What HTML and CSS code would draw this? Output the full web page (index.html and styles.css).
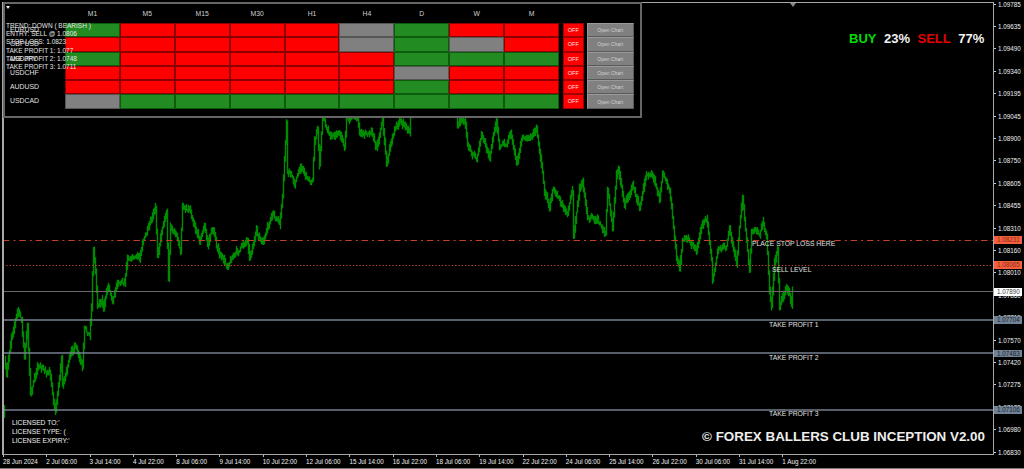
FILE: index.html
```html
<!DOCTYPE html>
<html lang="en">
<head>
    <meta charset="UTF-8">
    <title>Forex Ballers Club Inception</title>
    <link rel="stylesheet" href="styles.css">
</head>
<body>
    <div class="terminal">
        <div class="chart">
            <svg class="plot" width="994" height="454" viewBox="0 0 994 454">
                <path id="candles" class="candles" d=""></path>
                <line class="level stop" x1="3" y1="240.5" x2="993" y2="240.5"></line>
                <line class="level sell" x1="3" y1="265.5" x2="993" y2="265.5"></line>
                <line class="level now" x1="3" y1="291.5" x2="993" y2="291.5"></line>
                <line class="level tp" x1="3" y1="320" x2="993" y2="320"></line>
                <line class="level tp" x1="3" y1="353" x2="993" y2="353"></line>
                <line class="level tp" x1="3" y1="410" x2="993" y2="410"></line>
            </svg>
            <div class="frame"></div>
            <div class="shift-mark"></div>

            <span class="level-label label-stop">PLACE STOP LOSS HERE</span>
            <span class="level-label label-sell">SELL LEVEL</span>
            <span class="level-label label-tp1">TAKE PROFIT 1</span>
            <span class="level-label label-tp2">TAKE PROFIT 2</span>
            <span class="level-label label-tp3">TAKE PROFIT 3</span>

            <div class="panel">
                <div class="panel__mark"></div>
                <div class="matrix">
                    <div></div>
                    <div class="head">M1</div><div class="head">M5</div><div class="head">M15</div>
                    <div class="head">M30</div><div class="head">H1</div><div class="head">H4</div>
                    <div class="head">D</div><div class="head">W</div><div class="head">M</div>
                    <div></div><div></div>

                    <div class="symbol">EURUSD</div>
                    <div class="cell green"></div><div class="cell red"></div><div class="cell red"></div>
                    <div class="cell red"></div><div class="cell red"></div><div class="cell gray"></div>
                    <div class="cell green"></div><div class="cell red"></div><div class="cell red"></div>
                    <div class="off">OFF</div><button class="open">Open Chart</button>

                    <div class="symbol">GBPUSD</div>
                    <div class="cell red"></div><div class="cell red"></div><div class="cell red"></div>
                    <div class="cell red"></div><div class="cell red"></div><div class="cell gray"></div>
                    <div class="cell green"></div><div class="cell gray"></div><div class="cell red"></div>
                    <div class="off">OFF</div><button class="open">Open Chart</button>

                    <div class="symbol">USDJPY</div>
                    <div class="cell green"></div><div class="cell red"></div><div class="cell red"></div>
                    <div class="cell red"></div><div class="cell red"></div><div class="cell red"></div>
                    <div class="cell green"></div><div class="cell green"></div><div class="cell green"></div>
                    <div class="off">OFF</div><button class="open">Open Chart</button>

                    <div class="symbol">USDCHF</div>
                    <div class="cell red"></div><div class="cell red"></div><div class="cell red"></div>
                    <div class="cell red"></div><div class="cell red"></div><div class="cell red"></div>
                    <div class="cell gray"></div><div class="cell red"></div><div class="cell red"></div>
                    <div class="off">OFF</div><button class="open">Open Chart</button>

                    <div class="symbol">AUDUSD</div>
                    <div class="cell red"></div><div class="cell red"></div><div class="cell red"></div>
                    <div class="cell red"></div><div class="cell red"></div><div class="cell red"></div>
                    <div class="cell green"></div><div class="cell red"></div><div class="cell red"></div>
                    <div class="off">OFF</div><button class="open">Open Chart</button>

                    <div class="symbol">USDCAD</div>
                    <div class="cell gray"></div><div class="cell green"></div><div class="cell green"></div>
                    <div class="cell green"></div><div class="cell green"></div><div class="cell green"></div>
                    <div class="cell green"></div><div class="cell green"></div><div class="cell green"></div>
                    <div class="off">OFF</div><button class="open">Open Chart</button>
                </div>
                <div class="trade">
                    <div>TREND: DOWN ( BEARISH )</div>
                    <div>ENTRY: SELL @ 1.0806</div>
                    <div>STOP LOSS: 1.0823</div>
                    <div>TAKE PROFIT 1: 1.077</div>
                    <div>TAKE PROFIT 2: 1.0748</div>
                    <div>TAKE PROFIT 3: 1.0711</div>
                </div>
            </div>

            <div class="strength">
                <span class="buy">BUY</span><span>23%</span>
                <span class="sell">SELL</span><span>77%</span>
            </div>

            <div class="license">
                <div>LICENSED TO:'</div>
                <div>LICENSE TYPE: (</div>
                <div>LICENSE EXPIRY:'</div>
            </div>

            <div class="brand">© FOREX BALLERS CLUB INCEPTION V2.00</div>
        </div>

        <div class="prices">
            <div class="prices__list">
                <div class="price">1.09785</div><div class="price">1.09635</div><div class="price">1.09490</div>
                <div class="price">1.09340</div><div class="price">1.09195</div><div class="price">1.09045</div>
                <div class="price">1.08900</div><div class="price">1.08750</div><div class="price">1.08605</div>
                <div class="price">1.08455</div><div class="price">1.08310</div><div class="price">1.08160</div>
                <div class="price">1.08010</div><div class="price">1.07860</div><div class="price">1.07715</div>
                <div class="price">1.07570</div><div class="price">1.07420</div><div class="price">1.07275</div>
                <div class="price">1.07125</div><div class="price">1.06980</div><div class="price">1.06830</div>
            </div>
            <div class="tag tag-red tag-stop">1.08231</div>
            <div class="tag tag-red tag-sell">1.08065</div>
            <div class="tag tag-white tag-now">1.07890</div>
            <div class="tag tag-slate tag-tp1">1.07704</div>
            <div class="tag tag-slate tag-tp2">1.07483</div>
            <div class="tag tag-slate tag-tp3">1.07106</div>
        </div>

        <div class="times">
            <div class="time">28 Jun 2024</div><div class="time">2 Jul 06:00</div><div class="time">3 Jul 14:00</div>
            <div class="time">4 Jul 22:00</div><div class="time">8 Jul 06:00</div><div class="time">9 Jul 14:00</div>
            <div class="time">10 Jul 22:00</div><div class="time">12 Jul 06:00</div><div class="time">15 Jul 14:00</div>
            <div class="time">16 Jul 22:00</div><div class="time">18 Jul 06:00</div><div class="time">19 Jul 14:00</div>
            <div class="time">22 Jul 22:00</div><div class="time">24 Jul 06:00</div><div class="time">25 Jul 14:00</div>
            <div class="time">26 Jul 22:00</div><div class="time">30 Jul 06:00</div><div class="time">31 Jul 14:00</div>
            <div class="time">1 Aug 22:00</div>
        </div>
    </div>
    <script src="chart.js"></script>
</body>
</html>
```

FILE: styles.css
```css
* {
    box-sizing: border-box;
    margin: 0;
    padding: 0;
}
html, body {
    height: 100%;
    overflow: hidden;
    background-color: #000;
}
body {
    font-family: "Liberation Sans", Arial, sans-serif;
    color: #ccc;
}
.terminal {
    display: grid;
    grid-template-columns: 994px 30px;
    grid-template-rows: 455px 13px;
    width: 1024px;
    height: 469px;
    border-bottom: 1px solid #777;
}

/* chart canvas */
.chart {
    position: relative;
    overflow: hidden;
}
.plot {
    display: block;
}
.candles {
    fill: none;
    stroke: #008c00;
    stroke-width: 1.4;
}
.level {
    fill: none;
}
.stop {
    stroke: #c04224;
    stroke-dasharray: 6.5 4 2 3.8;
}
.sell {
    stroke: #c04a34;
    stroke-dasharray: 1.3 2;
}
.now {
    stroke: #6a6a6a;
}
.tp {
    stroke: #75808e;
    stroke-width: 1.5;
}
.frame {
    position: absolute;
    left: 2px;
    top: 2px;
    width: 992px;
    height: 453px;
    border: 1px solid #a8a8a8;
    border-left-width: 2px;
}
.shift-mark {
    position: absolute;
    left: 790px;
    top: 3px;
    border: 3px solid transparent;
    border-top: 4px solid #888;
}
.level-label {
    position: absolute;
    font-size: 6.8px;
    color: #e0e0e0;
    white-space: nowrap;
}
.label-stop { left: 752px; top: 240px; }
.label-sell { left: 772px; top: 266px; }
.label-tp1 { left: 769px; top: 321px; }
.label-tp2 { left: 769px; top: 354px; }
.label-tp3 { left: 769px; top: 410px; }

/* signal panel */
.panel {
    position: absolute;
    left: 3px;
    top: 2px;
    width: 639px;
    height: 116px;
    background-color: #000;
    border: 2px solid #666;
}
.panel__mark {
    position: absolute;
    left: 1px;
    top: 2px;
    border: 2.5px solid transparent;
    border-top: 3px solid #eee;
}
.matrix {
    display: grid;
    grid-template-columns: 60px repeat(9, 54.9px) 20.5px 47.5px;
    grid-template-rows: 19px repeat(6, 14.3px);
}
.head {
    font-size: 6.8px;
    color: #d0d0d0;
    text-align: center;
    line-height: 19px;
}
.symbol {
    font-size: 6.9px;
    line-height: 14.3px;
    padding-left: 5px;
    color: #e0e0e0;
}
.cell {
    border: 1px solid #000;
}
.red {
    background-color: #f00;
    border-color: #8c0000;
}
.green {
    background-color: #228b22;
    border-color: #0c5c0c;
}
.gray {
    background-color: #808080;
    border-color: #555;
}
.off {
    margin-left: 4px;
    width: 20.5px;
    background-color: #f00;
    border: 1px solid #a00000;
    color: #ffe0e0;
    font-size: 5.5px;
    line-height: 12.3px;
    text-align: center;
}
.open {
    margin-left: 7px;
    width: 47.5px;
    background-color: #808080;
    border: 1px solid #5a5a5a;
    border-top-color: #999;
    border-left-color: #999;
    color: #d0d0d0;
    font-family: inherit;
    font-size: 5px;
}
.trade {
    position: absolute;
    left: 1px;
    top: 18px;
    font-size: 6.5px;
    line-height: 8.2px;
    color: #e4e4e4;
    white-space: nowrap;
}

/* top right buy / sell share */
.strength {
    position: absolute;
    left: 849px;
    top: 31px;
    display: flex;
    gap: 7.5px;
    font-size: 13px;
    font-weight: bold;
    color: #f2f2f2;
}
.strength .sell {
    color: #e60000;
    stroke: none;
}
.buy {
    color: #00dc00;
}

.license {
    position: absolute;
    left: 12px;
    top: 419px;
    font-size: 6.7px;
    line-height: 8.9px;
    color: #f0f0f0;
}
.brand {
    position: absolute;
    right: 9px;
    top: 429px;
    font-size: 13.4px;
    font-weight: bold;
    color: #eee;
    white-space: nowrap;
}

/* price axis */
.prices {
    position: relative;
    overflow: hidden;
}
.prices__list {
    margin-top: -7px;
}
.price {
    display: flex;
    align-items: center;
    gap: 2px;
    height: 22.4px;
    font-size: 6.3px;
    color: #f0f0f0;
}
.price::before {
    content: "";
    width: 2px;
    height: 1px;
    background-color: #ccc;
}
.tag {
    position: absolute;
    left: 0;
    width: 28px;
    height: 7.6px;
    padding-left: 3px;
    font-size: 6.3px;
    line-height: 7.6px;
}
.tag-red {
    background-color: #f4603f;
    color: #8a2c16;
}
.tag-white {
    background-color: #fff;
    color: #444;
}
.tag-slate {
    background-color: #708396;
    color: #1c2228;
}
.tag-stop { top: 236px; }
.tag-sell { top: 261px; }
.tag-now { top: 288px; }
.tag-tp1 { top: 316px; }
.tag-tp2 { top: 349.5px; }
.tag-tp3 { top: 406px; }

/* time axis */
.times {
    grid-column: 1 / 3;
    display: flex;
    padding-left: 3px;
}
.time {
    flex: 0 0 43.3px;
    font-size: 6.3px;
    color: #f0f0f0;
    white-space: nowrap;
}
.time::before {
    content: "";
    display: block;
    width: 1px;
    height: 2px;
    margin-bottom: 1px;
    background-color: #bbb;
}
```

FILE: chart.js
```js
// close line traced from the chart: [x, y] turning points, the noise is added below
const turns = [
    [5,362],[7,377],[10,352],[12,335],[18,310],[22,320],[25,358],[28,326],[31,393],[35,380],
    [38,365],[42,370],[50,373],[53,395],[56,410],[58,392],[62,358],[63,385],[68,365],[75,345],
    [83,370],[85,332],[90,336],[92,307],[93,273],[94,249],[96,270],[98,303],[102,300],[104,309],
    [107,290],[109,283],[113,298],[118,280],[125,280],[128,255],[133,255],[140,258],[143,240],[150,228],
    [156,211],[158,255],[163,225],[167,210],[169,278],[171,225],[177,235],[181,253],[183,208],[190,207],
    [200,238],[205,225],[208,245],[213,228],[220,255],[227,266],[233,255],[240,250],[248,238],[250,255],
    [257,232],[263,245],[270,225],[273,215],[280,225],[283,195],[287,123],[288,170],[295,182],[302,165],
    [308,178],[313,180],[315,140],[318,130],[320,165],[323,118],[332,135],[340,130],[345,147],[347,118],
    [358,118],[360,133],[373,135],[377,148],[383,118],[387,165],[393,135],[400,118],[410,130],[412,100],
    [456,100],[458,125],[465,120],[468,145],[477,158],[482,135],[487,150],[490,160],[497,120],[500,145],
    [507,145],[511,130],[517,160],[522,138],[530,140],[537,128],[540,150],[543,170],[545,190],[550,207],
    [553,190],[560,195],[568,210],[573,193],[574,236],[580,185],[583,175],[588,215],[597,220],[606,232],
    [608,190],[613,228],[617,177],[619,168],[625,205],[633,183],[640,210],[647,175],[652,172],[660,195],
    [663,170],[670,190],[672,208],[677,255],[680,270],[683,237],[693,245],[697,250],[703,225],[707,220],
    [712,255],[713,277],[718,250],[727,247],[730,230],[737,265],[740,230],[743,200],[747,240],[750,270],
    [752,232],[760,235],[763,223],[767,235],[770,290],[772,307],[775,262],[778,248],[780,305],[787,287],
    [792,303],[793,287]
];

let seed = 7;
function noise()
{
    seed = (seed * 16807) % 2147483647;
    return seed / 2147483647;
}

function yAt(x)
{
    let i = 1;
    while (turns[i][0] < x) i++;
    const [x0, y0] = turns[i - 1];
    const [x1, y1] = turns[i];
    return y0 + (y1 - y0) * (x - x0) / (x1 - x0);
}

let d = 'M4.5 405V418';
let drift = 0;
for (let x = 5; x < 793; x++)
{
    drift = drift * 0.8 + (noise() - 0.5) * 4;
    const a = yAt(x) + drift;
    const b = yAt(x + 1) + drift;
    const top = Math.min(a, b) - 1 - noise() * 3.5;
    const bottom = Math.max(a, b) + 1 + noise() * 3.5;
    d += `M${x + 0.5} ${top.toFixed(1)}V${bottom.toFixed(1)}`;
}
document.getElementById('candles').setAttribute('d', d);
```
